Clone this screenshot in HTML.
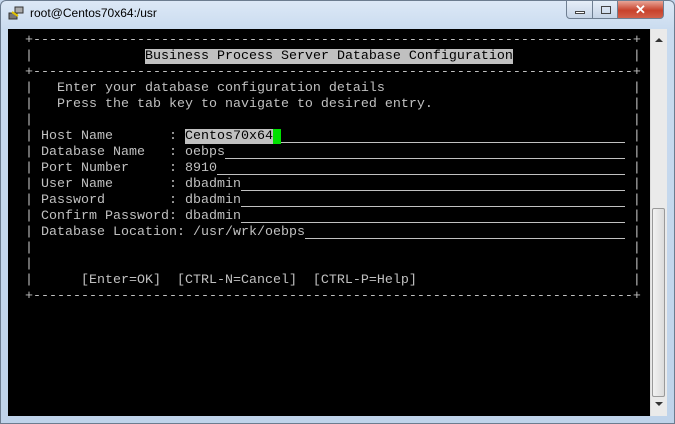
<!DOCTYPE html>
<html><head><meta charset="utf-8"><style>
html,body{margin:0;padding:0;}
body{width:675px;height:424px;position:relative;overflow:hidden;background:#c4d6ec;font-family:"Liberation Sans",sans-serif;}
.frame{position:absolute;left:0;top:0;width:675px;height:424px;background:linear-gradient(#dce8f6 0,#c9dbef 30px,#bfd3ea 100%);border-radius:6px 6px 0 0;box-sizing:border-box;border:1px solid #6c7c8f;}
.title{position:absolute;left:30px;top:6px;font-size:12px;color:#000;}
.icon{position:absolute;left:8px;top:6px;width:16px;height:16px;}
.term{position:absolute;left:8px;top:29px;width:642px;height:387px;background:#000;}
.sb{position:absolute;left:650px;top:29px;width:16px;height:387px;background:#eaeaea;border-left:1px solid #ddd;}
.thumb{position:absolute;left:652px;top:208px;width:13px;height:189px;background:linear-gradient(90deg,#f2f2f2,#dcdcdc);border:1px solid #9a9a9a;border-radius:2px;box-sizing:border-box;}
.ln{position:absolute;left:25px;font-family:"Liberation Mono",monospace;font-size:13.33px;line-height:16px;height:16px;color:#c0c0c0;white-space:pre;}
.hl{background:#c0c0c0;color:#000;}
.cur{background:#00e000;}
.ul{position:absolute;height:1px;background:#c0c0c0;}
.btns{position:absolute;left:566px;top:0;height:20px;}
.b{position:absolute;top:0;height:19px;border:1px solid #6f7f92;box-sizing:border-box;background:linear-gradient(#e6eef8,#c5d4e6);}
</style></head><body>
<div class="frame"></div>
<svg class="icon" viewBox="0 0 16 16"><rect x="1" y="7" width="8" height="6" fill="#777" stroke="#333"/><rect x="7" y="1" width="8" height="6" fill="#aaa" stroke="#333"/><path d="M4 6 L10 10" stroke="#e0c000" stroke-width="2"/></svg>
<div class="title">root@Centos70x64:/usr</div>
<div class="btns">
<div class="b" style="left:0;width:27px;border-radius:0 0 0 4px"><div style="position:absolute;left:8px;top:10px;width:10px;height:3px;border:1px solid #444;background:#fff;box-sizing:border-box"></div></div>
<div class="b" style="left:26px;width:26px"><div style="position:absolute;left:8px;top:5px;width:10px;height:8px;border:1px solid #444;box-sizing:border-box"></div></div>
<div class="b" style="left:51px;width:47px;background:linear-gradient(#e8a597,#c8422c 55%,#d2604a);border-radius:0 0 4px 0;color:#fff;font-weight:bold;font-size:13px;text-align:center;line-height:17px">✕</div>
</div>
<div class="term"></div>
<div class="sb"><div style="position:absolute;left:4px;top:9px;width:0;height:0;border-left:4px solid transparent;border-right:4px solid transparent;border-bottom:4px solid #333"></div><div style="position:absolute;left:4px;top:373px;width:0;height:0;border-left:4px solid transparent;border-right:4px solid transparent;border-top:4px solid #333"></div></div>
<div class="thumb"></div>

<div class="ln" style="top:33px">+---------------------------------------------------------------------------+</div>
<div class="ln" style="top:49px">|              <span class="hl">Business Process Server Database Configuration</span>               |</div>
<div class="ln" style="top:65px">+---------------------------------------------------------------------------+</div>
<div class="ln" style="top:81px">|   Enter your database configuration details                               |</div>
<div class="ln" style="top:97px">|   Press the tab key to navigate to desired entry.                         |</div>
<div class="ln" style="top:113px">|                                                                           |</div>
<div class="ln" style="top:129px">| Host Name       : <span class="hl">Centos70x64</span><span class="cur"> </span>                                            |</div>
<div class="ln" style="top:145px">| Database Name   : oebps                                                   |</div>
<div class="ln" style="top:161px">| Port Number     : 8910                                                    |</div>
<div class="ln" style="top:177px">| User Name       : dbadmin                                                 |</div>
<div class="ln" style="top:193px">| Password        : dbadmin                                                 |</div>
<div class="ln" style="top:209px">| Confirm Password: dbadmin                                                 |</div>
<div class="ln" style="top:225px">| Database Location: /usr/wrk/oebps                                         |</div>
<div class="ln" style="top:241px">|                                                                           |</div>
<div class="ln" style="top:257px">|                                                                           |</div>
<div class="ln" style="top:273px">|      [Enter=OK]  [CTRL-N=Cancel]  [CTRL-P=Help]                           |</div>
<div class="ln" style="top:289px">+---------------------------------------------------------------------------+</div>

<div class="ul" style="left:281px;width:344px;top:142px"></div>
<div class="ul" style="left:225px;width:400px;top:158px"></div>
<div class="ul" style="left:217px;width:408px;top:174px"></div>
<div class="ul" style="left:241px;width:384px;top:190px"></div>
<div class="ul" style="left:241px;width:384px;top:206px"></div>
<div class="ul" style="left:241px;width:384px;top:222px"></div>
<div class="ul" style="left:305px;width:320px;top:238px"></div>
</body></html>
